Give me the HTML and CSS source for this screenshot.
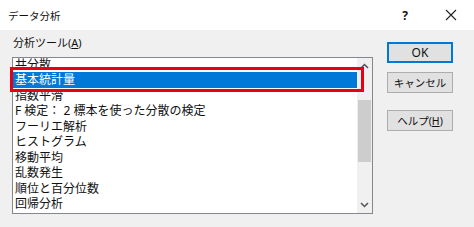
FILE: index.html
```html
<!DOCTYPE html>
<html lang="ja">
<head>
    <meta charset="UTF-8">
    <title>データ分析</title>
    <link rel="stylesheet" href="styles.css">
</head>
<body>
    <div class="dialog">
        <div class="titlebar">
            <span class="title">データ分析</span>
            <span class="title-btn help-btn">?</span>
            <span class="title-btn close-btn">
                <svg width="12" height="12" viewBox="0 0 12 12"><path d="M1 1 L11 11 M11 1 L1 11" stroke="#222" stroke-width="1.1" fill="none"/></svg>
            </span>
        </div>

        <div class="main">
            <div class="left">
                <div class="label">分析ツール(<u>A</u>)</div>
                <div class="listbox">
                    <ul class="items">
                        <li>共分散</li>
                        <li class="selected">基本統計量</li>
                        <li>指数平滑</li>
                        <li>F 検定： 2 標本を使った分散の検定</li>
                        <li>フーリエ解析</li>
                        <li>ヒストグラム</li>
                        <li>移動平均</li>
                        <li>乱数発生</li>
                        <li>順位と百分位数</li>
                        <li>回帰分析</li>
                    </ul>
                    <div class="scrollbar">
                        <svg class="arrow" width="15" height="17" viewBox="0 0 15 17"><path d="M4 10 L7.5 6.5 L11 10" stroke="#555" stroke-width="1.5" fill="none"/></svg>
                        <div class="track">
                            <div class="thumb"></div>
                        </div>
                        <svg class="arrow" width="15" height="17" viewBox="0 0 15 17"><path d="M4 7 L7.5 10.5 L11 7" stroke="#555" stroke-width="1.5" fill="none"/></svg>
                    </div>
                    <div class="marker"></div>
                </div>
            </div>

            <div class="buttons">
                <button class="btn default">OK</button>
                <button class="btn">キャンセル</button>
                <button class="btn help">ヘルプ(<u>H</u>)</button>
            </div>
        </div>
    </div>
</body>
</html>
```

FILE: styles.css
```css
body {
    margin: 0;
    font-family: "Noto Sans", "Noto Sans CJK JP", sans-serif;
    color: #111;
    background: #f0f0f0;
}
.dialog {
    width: 474px;
    height: 227px;
    background: #f0f0f0;
    overflow: hidden;
}
.titlebar {
    height: 30px;
    background: #fff;
    display: flex;
    align-items: center;
    padding-left: 8px;
}
.title {
    font-size: 10.5px;
    flex: 1;
}
.title-btn {
    width: 46px;
    text-align: center;
    font-size: 12px;
    font-weight: bold;
}
.close-btn {
    display: flex;
    justify-content: center;
}
.main {
    display: flex;
    padding: 0 12px;
}
.left {
    width: 361px;
    padding-top: 5px;
}
.label {
    font-size: 11px;
    line-height: 15px;
    padding-left: 1px;
    margin-bottom: 7px;
}
.listbox {
    position: relative;
    height: 155px;
    border: 1px solid #828790;
    background: #fff;
    display: flex;
}
.items {
    flex: 1;
    list-style: none;
    margin: -1.3px 0 0;
    padding: 0;
    overflow: hidden;
    font-size: 12px;
}
.items li {
    height: 15.5px;
    line-height: 15.5px;
    padding-left: 2px;
    white-space: nowrap;
}
.items li.selected {
    background: #0078d7;
    color: #fff;
}
.scrollbar {
    width: 15px;
    background: #f0f0f0;
    display: flex;
    flex-direction: column;
}
.track {
    flex: 1;
    padding-top: 25px;
}
.thumb {
    margin: 0 1px;
    height: 62px;
    background: #cdcdcd;
}
.marker {
    position: absolute;
    left: -3px;
    top: 9px;
    width: 348px;
    height: 19px;
    border: 3px solid #e60012;
}
.buttons {
    margin-left: 14px;
    padding-top: 12px;
    display: flex;
    flex-direction: column;
}
.btn {
    width: 66px;
    height: 21px;
    padding: 0;
    font-family: "Noto Sans", "Noto Sans CJK JP", sans-serif;
    font-size: 10.5px;
    color: #111;
    background: #e1e1e1;
    border: 1px solid #adadad;
    margin-bottom: 9px;
}
.btn.default {
    border: 2px solid #0078d7;
    font-size: 12px;
}
.btn.help {
    margin-top: 8px;
}
```
